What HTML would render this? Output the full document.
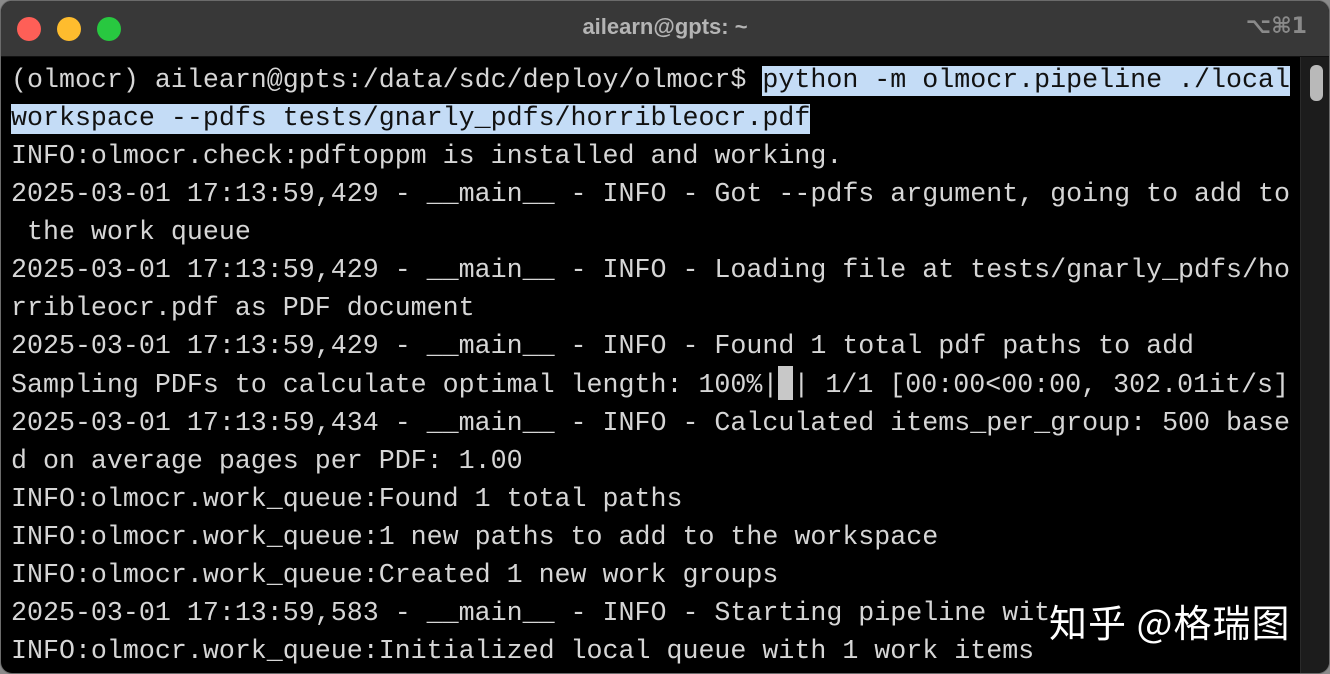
<!DOCTYPE html>
<html><head><meta charset="utf-8"><style>
html,body{margin:0;padding:0;background:#8a8a8a;}
body{width:1330px;height:674px;overflow:hidden;position:relative;}
.win{position:absolute;left:0;top:0;width:1328px;height:672px;border:1px solid #6b6b6b;border-radius:12px;background:#000;overflow:hidden;}
.title{position:absolute;left:0;top:0;right:0;height:55px;background:#383838;border-bottom:1px solid #111;}
.dot{position:absolute;top:16px;width:24px;height:24px;border-radius:50%;}
.ttl{position:absolute;left:0;right:0;top:13px;text-align:center;color:#b4b4b4;font:bold 22px "Liberation Sans","DejaVu Sans",sans-serif;}
.sc{position:absolute;right:22px;top:13px;color:#8a8a8a;font:bold 22px "DejaVu Sans",sans-serif;}
.term{position:absolute;left:10px;top:61px;font:26.65px/38px "Liberation Mono","DejaVu Sans Mono",monospace;color:#d6d6d6;white-space:pre;}
.sel{background:#c4dcf6;color:#111;}
.sb{position:absolute;right:0;top:56px;width:28px;bottom:0;background:#1c1c1c;border-left:1px solid #2a2a2a;}
.thumb{position:absolute;left:9px;top:8px;width:13px;height:36px;border-radius:6px;background:#b9b9b9;}
.cur{display:inline-block;width:15px;height:34px;background:#c8c8c8;vertical-align:-8px;}
.wm{position:absolute;left:1048px;top:592px;color:#fff;font:38px "Noto Sans CJK SC","WenQuanYi Zen Hei",sans-serif;letter-spacing:1px;}
</style></head><body>
<div class="win">
<div class="title">
<div class="dot" style="left:16px;background:#fe5f57"></div>
<div class="dot" style="left:56px;background:#febc2e"></div>
<div class="dot" style="left:96px;background:#28c840"></div>
<div class="ttl">ailearn@gpts: ~</div>
<div class="sc">⌥⌘1</div>
</div>
<div class="term">(olmocr) ailearn@gpts:/data/sdc/deploy/olmocr$ <span class="sel">python -m olmocr.pipeline ./local</span>
<span class="sel">workspace --pdfs tests/gnarly_pdfs/horribleocr.pdf</span>
INFO:olmocr.check:pdftoppm is installed and working.
2025-03-01 17:13:59,429 - __main__ - INFO - Got --pdfs argument, going to add to
 the work queue
2025-03-01 17:13:59,429 - __main__ - INFO - Loading file at tests/gnarly_pdfs/ho
rribleocr.pdf as PDF document
2025-03-01 17:13:59,429 - __main__ - INFO - Found 1 total pdf paths to add
Sampling PDFs to calculate optimal length: 100%|<span class="cur"></span>| 1/1 [00:00&lt;00:00, 302.01it/s]
2025-03-01 17:13:59,434 - __main__ - INFO - Calculated items_per_group: 500 base
d on average pages per PDF: 1.00
INFO:olmocr.work_queue:Found 1 total paths
INFO:olmocr.work_queue:1 new paths to add to the workspace
INFO:olmocr.work_queue:Created 1 new work groups
2025-03-01 17:13:59,583 - __main__ - INFO - Starting pipeline wit
INFO:olmocr.work_queue:Initialized local queue with 1 work items</div>
<div class="sb"><div class="thumb"></div></div>
<div class="wm">知乎 @格瑞图</div>
</div>
</body></html>
